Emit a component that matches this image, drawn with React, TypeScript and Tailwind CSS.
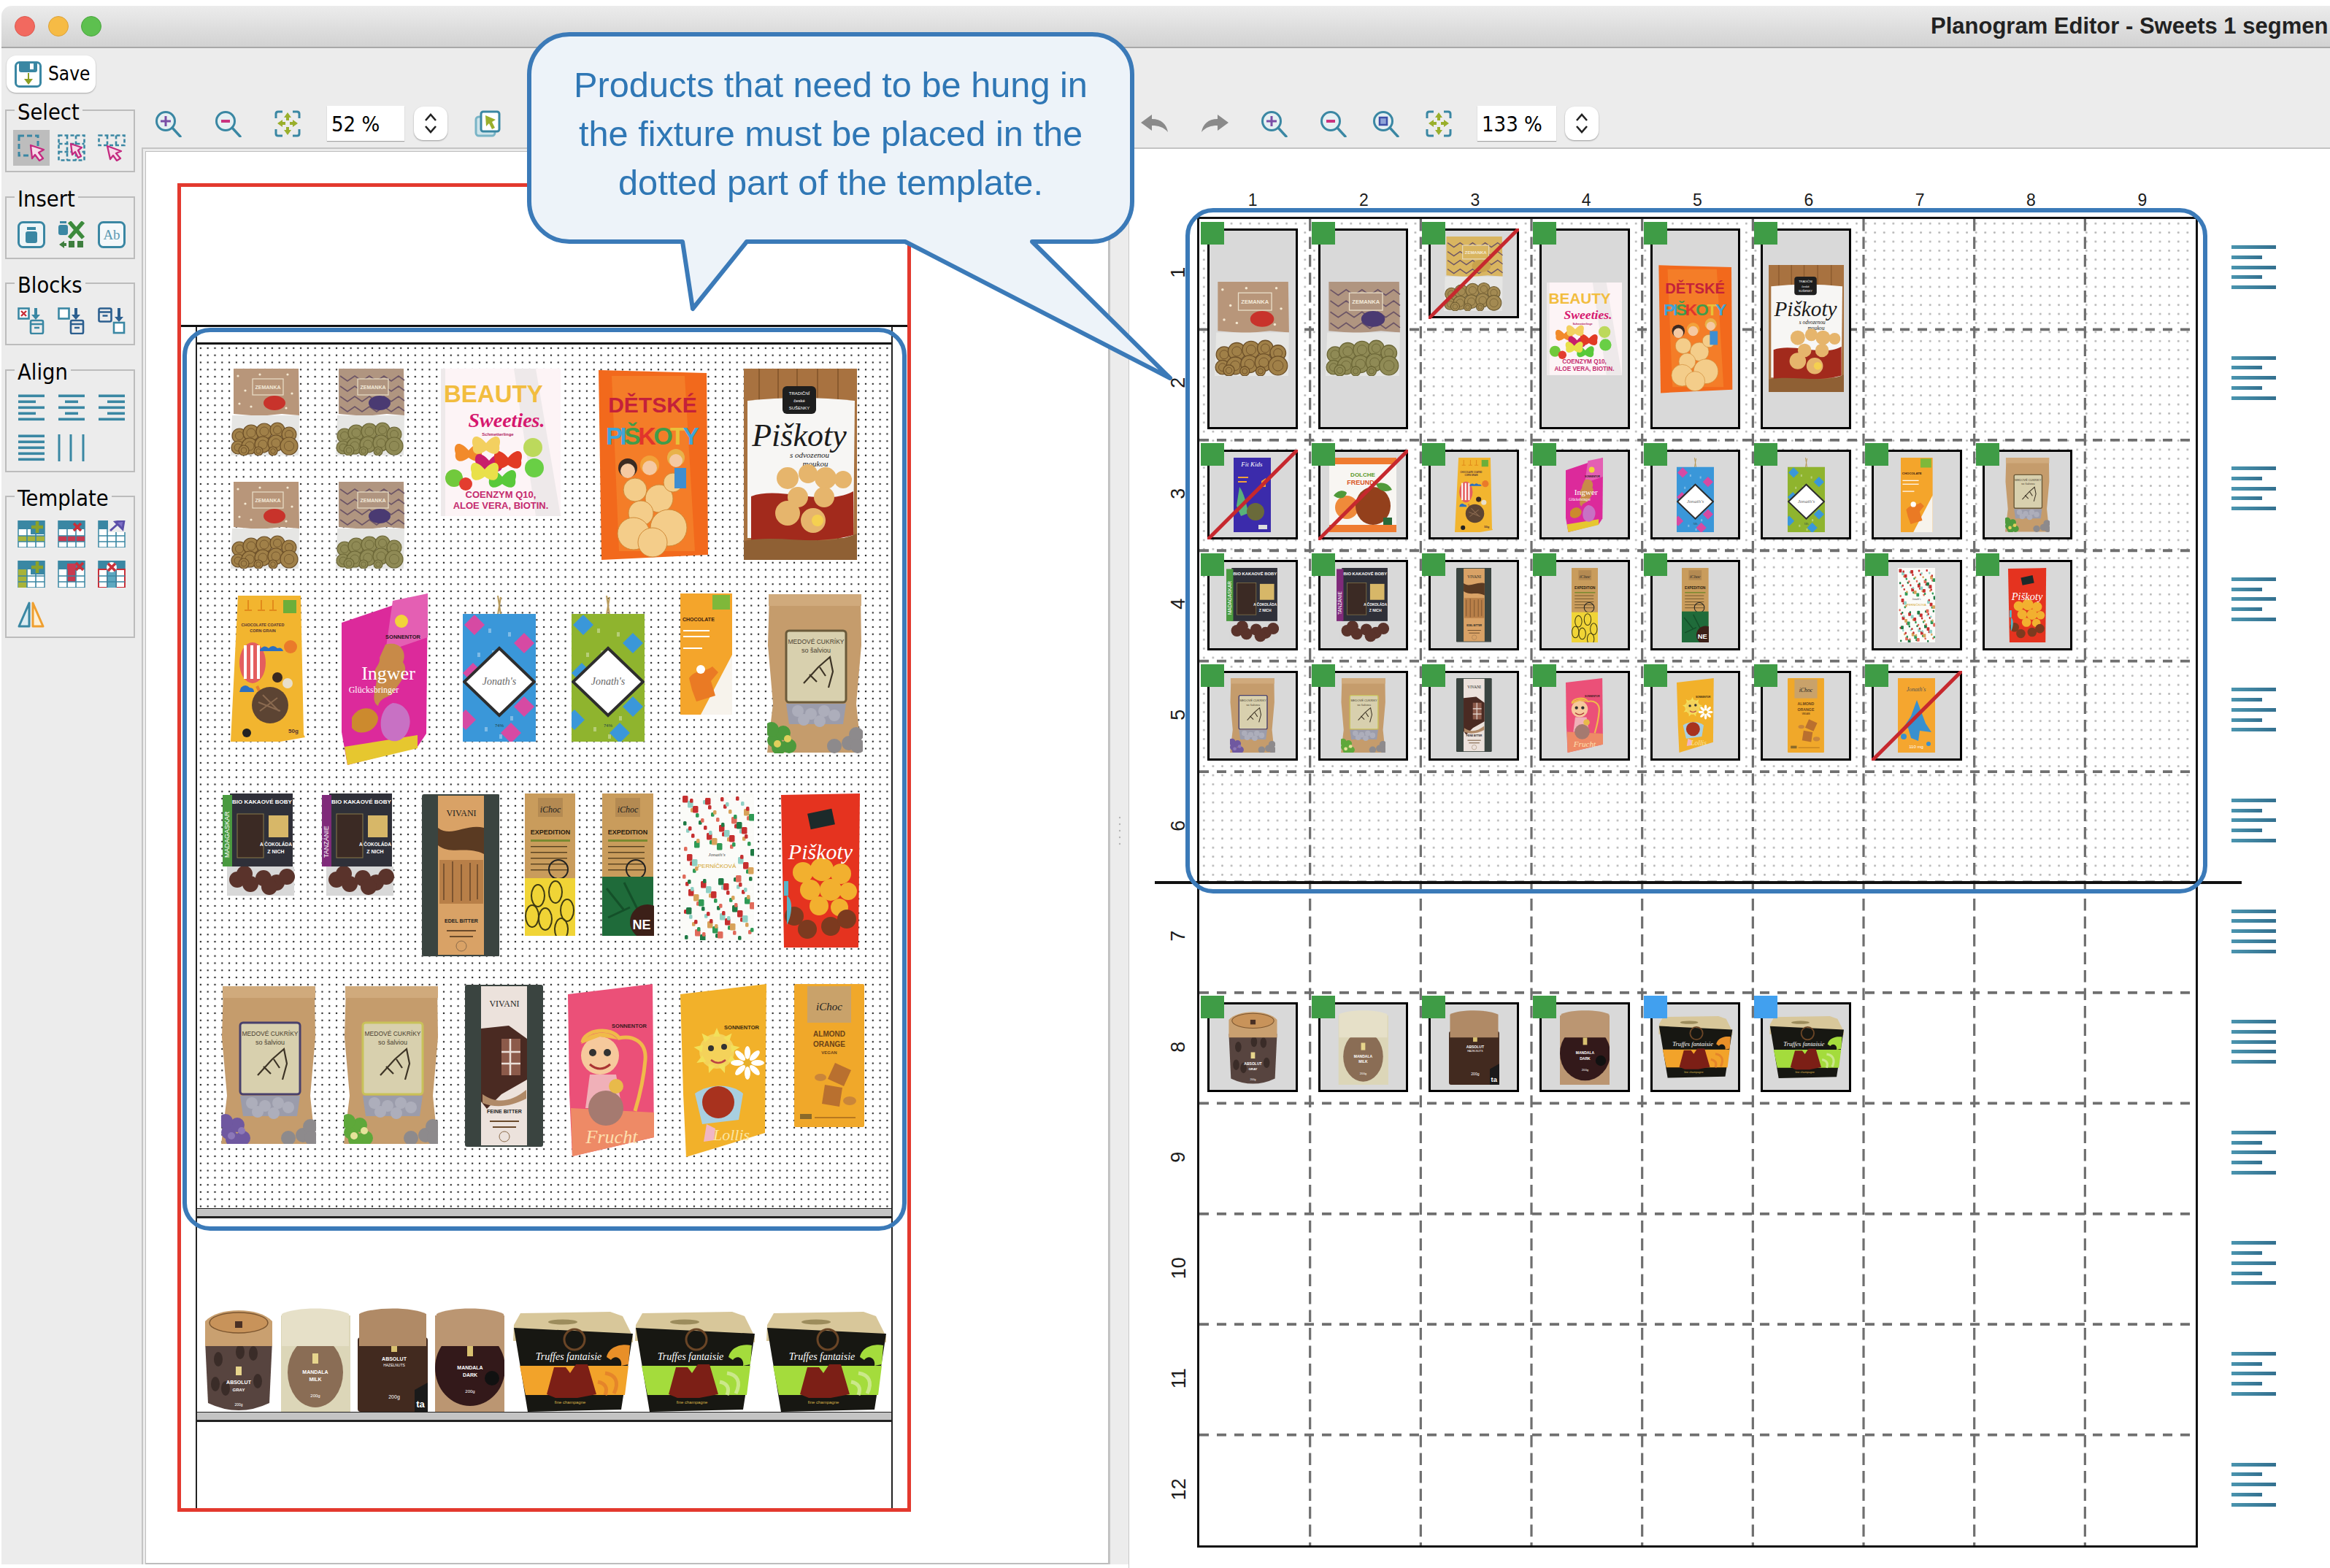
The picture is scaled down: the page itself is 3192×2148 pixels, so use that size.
import type { ReactNode } from "react";

// Planogram editor: left pane = fixture preview, right pane = template grid.

const TEAL = "#3a87a3";

function T({ x, y, s, c = "#fff", b, a = "middle", f = "Liberation Sans", i, children }: { x: number; y: number; s: number; c?: string; b?: boolean; a?: "middle" | "start"; f?: string; i?: boolean; children: ReactNode }) {
    return (
        <text x={x} y={y} fontSize={s} fill={c} fontWeight={b ? 700 : 400} fontStyle={i ? "italic" : "normal"} textAnchor={a} fontFamily={f}>
            {children}
        </text>
    );
}

const SERIF = "Liberation Serif";

const cookie = (card: string, badge: string, purple: boolean, crumb: string, edge: string) => (
    <>
        <path d="M4 0H93L94 64L70 62L40 65L4 62Z" fill={card} />
        {purple
            ? [10, 24, 38, 52].map((y) => <path key={y} d={`M6 ${y}l10 7 10-7 10 7 10-7 10 7 10-7 10 7 10-7 8 6`} fill="none" stroke="#6c5566" strokeWidth="1.6" />)
            : [[10, 10], [20, 30], [12, 48], [78, 8], [84, 34], [28, 52], [76, 54], [40, 8], [66, 40]].map(([x, y]) => <circle key={`${x}${y}`} cx={x} cy={y} r="1.6" fill="#f5e9d2" />)}
        <rect x="30" y="14" width="42" height="22" fill={card} stroke="#eadfc9" strokeWidth="1.2" />
        <T x={51} y={28} s={7} b c="#f3ead9">ZEMANKA</T>
        <ellipse cx="60" cy="47" rx="15" ry="10" fill={badge} />
        <path d="M2 64H94L93 119H0Z" fill="#e6e6e4" />
        {[[12, 92, 10], [28, 88, 11], [46, 86, 11], [64, 84, 10], [80, 90, 10], [10, 108, 9], [26, 106, 11], [44, 104, 11], [62, 102, 11], [80, 106, 12], [18, 112, 7], [38, 113, 6], [58, 113, 6]].map(([x, y, r]) => (
            <g key={`${x}-${y}`}>
                <circle cx={x} cy={y} r={r} fill={crumb} stroke={edge} strokeWidth="1.2" />
                <circle cx={x} cy={y} r={r * 0.55} fill="none" stroke={edge} strokeWidth=".8" />
            </g>
        ))}
    </>
);

const diamonds = (base: string, accent: string, h: number) => (
    <>
        <path d="M48 26L52 2M52 26L48 0" stroke="#b89a5a" strokeWidth="2" fill="none" />
        <rect x="0" y="25" width="100" height={h - 25} fill={base} />
        {[[16, 40], [84, 65], [14, 106], [84, 152], [4, 170], [66, 188]].map(([x, y]) => (
            <path key={`${x}${y}`} d={`M${x} ${y - 14}l14 14-14 14-14-14Z`} fill={accent} />
        ))}
        {[[35, 45], [62, 50], [40, 75], [20, 78], [65, 165], [30, 180], [50, 190], [85, 120]].map(([x, y]) => (
            <rect key={`${x}${y}`} x={x} y={y} width="4" height="6" fill="#fff" opacity=".35" />
        ))}
        <path d="M50 72L98 118L50 164L2 118Z" fill="#fff" stroke="#2d2d2d" strokeWidth="4" />
        <T x={50} y={122} s={14} c="#666" f={SERIF} i>Jonath's</T>
        <T x={50} y={180} s={6} c="#244">74%</T>
    </>
);

const honey = (line: string, leaf: string, leaf2: string) => (
    <>
        <path d="M3 0H128L129 70L122 150L129 217H0L8 150L1 70Z" fill="#c59c6c" />
        <rect x="2" y="0" width="127" height="16" fill="#d0aa7c" />
        <rect x="26" y="50" width="82" height="98" rx="4" fill="#d8d0ae" stroke={line} strokeWidth="3" />
        <T x={67} y={68} s={8.5} c="#4a4030">MEDOVÉ CUKRÍKY</T>
        <T x={67} y={80} s={9} c="#4a4030">so šalviou</T>
        <path d="M50 122l20-22 16-14 4 20-6 22M58 110l10 10M72 100l8 12" stroke="#3d3426" strokeWidth="2.2" fill="none" />
        <path d="M26 150H108L104 178L30 178Z" fill="#9b9cab" />
        {[[42, 160], [60, 164], [78, 160], [92, 166], [50, 172], [72, 174]].map(([x, y]) => <circle key={`${x}${y}`} cx={x} cy={y} r="8" fill="#adaebb" />)}
        {[[10, 200], [22, 190], [6, 185], [30, 208], [16, 210]].map(([x, y]) => <circle key={`${x}${y}`} cx={x} cy={y} r="10" fill={leaf} />)}
        {[[14, 205], [28, 198]].map(([x, y]) => <circle key={`${x}${y}`} cx={x} cy={y} r="5" fill={leaf2} />)}
        {[[112, 204], [122, 192], [92, 208], [124, 208]].map(([x, y]) => <circle key={`${x}${y}`} cx={x} cy={y} r="10" fill="#8d8a8c" />)}
    </>
);

const darkBag = (strip: string, name: string) => (
    <>
        <rect x="6" y="100" width="92" height="40" fill="#d8d8d8" />
        {[[20, 118], [38, 124], [56, 116], [74, 122], [88, 114], [30, 110], [64, 128]].map(([x, y]) => <circle key={`${x}${y}`} cx={x} cy={y} r="11" fill="#5a332b" />)}
        <rect x="10" y="0" width="86" height="100" fill="#2f3039" />
        <rect x="0" y="2" width="13" height="98" fill={strip} />
        <text transform="translate(9 88) rotate(-90)" fontSize="9" fill="#fff" fontFamily="Liberation Sans">{name}</text>
        <T x={54} y={14} s={8} b>BIO KAKAOVÉ BOBY</T>
        <rect x="20" y="28" width="36" height="60" fill="#3b2a24" stroke="#8a7a4a" />
        <rect x="63" y="30" width="27" height="30" fill="#d7b768" />
        <T x={73} y={72} s={6.5} b>A ČOKOLÁDA</T>
        <T x={73} y={82} s={7} b>Z NICH</T>
    </>
);

const vivani = (center: string, art: ReactNode, label: string) => (
    <>
        <rect x="0" y="0" width="107" height="222" rx="3" fill="#3a4440" />
        <rect x="22" y="2" width="63" height="218" fill={center} />
        {art}
        <T x={54} y={30} s={12} c="#222" f={SERIF}>VIVANI</T>
        <T x={54} y={176} s={7} b c="#222">{label}</T>
        <rect x="34" y="186" width="40" height="2" fill="#6a4a2a" />
        <rect x="38" y="194" width="32" height="2" fill="#6a4a2a" />
        <circle cx="54" cy="208" r="7" fill="none" stroke="#8a6a4a" />
    </>
);

const hoc = (bottom: ReactNode) => (
    <>
        <rect x="0" y="0" width="70" height="195" fill="#c99c5c" />
        <rect x="18" y="6" width="34" height="26" fill="#b48a52" />
        <T x={35} y={26} s={12} c="#222" f={SERIF} i>iChoc</T>
        <T x={35} y={56} s={9} b c="#2a2010">EXPEDITION</T>
        <rect x="8" y="63" width="54" height="3" fill="#7a8a30" />
        {[72, 80, 88, 96, 104].map((y) => <rect key={y} x="8" y={y} width="50" height="1.4" fill="#55401f" />)}
        <circle cx="46" cy="104" r="13" fill="none" stroke="#222" strokeWidth="2" />
        {bottom}
    </>
);

const cylinder = (lid: string, body: ReactNode, round: boolean) => (
    <>
        {body}
        <path d={`M2 ${round ? 18 : 8}C20 -2 76 -2 94 ${round ? 18 : 8}V52H2Z`} fill={lid} />
        {round && <ellipse cx="48" cy="20" rx="40" ry="14" fill="#c8935a" stroke="#7c5630" strokeWidth="1.5" />}
        {round && <rect x="43" y="18" width="10" height="9" fill="#4a3024" />}
    </>
);

const truffle = (band: string, swirl: string) => (
    <>
        <path d="M3 18L12 2L135 0L152 6L166 34V42L2 40Z" fill="#d8c79a" />
        <ellipse cx="70" cy="14" rx="20" ry="3.5" fill="#9c8c5c" />
        <path d="M3 22L166 30L150 134L22 137Z" fill="#171712" />
        <circle cx="86" cy="38" r="14" fill="none" stroke="#6a4526" strokeWidth="3" />
        <T x={78} y={66} s={14} f={SERIF} i>Truffes fantaisie</T>
        <path d="M11 74H160L155 114H19Z" fill={band} />
        <path d="M130 62c4-16 22-18 32-16l-2 26-10 2c2-10-8-16-14-8z" fill={swirl} />
        <path d="M128 84c14 2 20 12 12 28M118 96c10 2 14 8 10 18" stroke={swirl === band ? "#cbe88a" : "#e5852a"} strokeWidth="5" fill="none" />
        <path d="M48 113L58 76H74L80 84L88 72H104L116 113L90 118L60 118Z" fill="#7c1f16" />
        <T x={80} y={126} s={6} c="#d8b24a">fine champagne</T>
    </>
);

const xmasBits = Array.from({ length: 150 }, (_, i) => ({
    x: 3 + ((i * 37) % 94),
    y: 3 + ((i * 61) % 194),
    c: ["#c62f2f", "#2f9a55", "#8fd0c4", "#e06a5a", "#c62f2f", "#1f7a44", "#d8a25a"][i % 7],
    r: i % 3 === 0 ? 5 : 3
}));

const ART: Record<string, { w: number; h: number; art: ReactNode }> = {
    cookieRed: { w: 95, h: 119, art: cookie("#b8967a", "#c8332b", false, "#a08048", "#6c4f28") },
    cookiePurple: { w: 95, h: 119, art: cookie("#b09580", "#4a3a72", true, "#8f8a55", "#6b6636") },
    cookieYellow: { w: 95, h: 119, art: cookie("#d9b560", "#c9a24c", true, "#a38a52", "#6c5a30") },
    beauty: {
        w: 164,
        h: 202,
        art: (
            <>
                <rect width="164" height="202" fill="#fdf4f6" />
                <path d="M100 0h30l34 202h-34zM0 0v202h6V0z" fill="#eee9ea" />
                <T x={4} y={46} s={33} a="start" c="#f2bd3f" b>BEAUTY</T>
                <T x={90} y={80} s={28} c="#d6186f" b f={SERIF} i>Sweeties.</T>
                <T x={78} y={92} s={6} c="#b01860" b>Schmetterlinge</T>
                {[[38, 112, "#f28a2a"], [66, 126, "#c81e6b"], [92, 122, "#e23a24"], [62, 102, "#f3d060"], [84, 148, "#59c93a"], [60, 138, "#e9e04a"]].map(([x, y, c]) => (
                    <path key={`${x}${y}`} d={`M${x} ${y}c-14-16-22-8-18 4-2 12 8 14 18 6 10 8 20 6 18-6 4-12-4-20-18-4z`} fill={c as string} />
                ))}
                <circle cx="126" cy="108" r="13" fill="#bcd95c" />
                <circle cx="128" cy="136" r="13" fill="#69cf45" />
                <circle cx="18" cy="150" r="12" fill="#71c93c" />
                <circle cx="34" cy="158" r="9" fill="#e33d2f" />
                <T x={82} y={177} s={13} b c="#c42b6e">COENZYM Q10,</T>
                <T x={82} y={192} s={13} b c="#c42b6e">ALOE VERA, BIOTIN.</T>
            </>
        )
    },
    detske: {
        w: 153,
        h: 262,
        art: (
            <>
                <path d="M2 2L150 6L152 255L6 262Z" fill="#f2691c" />
                <path d="M20 10h100l14 240H30z" fill="#f47d28" />
                <T x={76} y={60} s={30} b c="#c4213a">DĚTSKÉ</T>
                <text x="76" y="104" fontSize="34" fontWeight="700" textAnchor="middle" fontFamily="Liberation Sans" textLength="128">
                    <tspan fill="#3fa4d8">PI</tspan><tspan fill="#3f9c4b">Š</tspan><tspan fill="#e1342c">K</tspan><tspan fill="#3f9c4b">O</tspan><tspan fill="#e8c13a">T</tspan><tspan fill="#3fa4d8">Y</tspan>
                </text>
                {[[52, 166, 16], [85, 178, 19], [60, 198, 17], [104, 156, 13], [50, 226, 22], [98, 218, 25], [76, 238, 20]].map(([x, y, r]) => <circle key={`${x}${y}`} cx={x} cy={y} r={r} fill="#f4cd8a" stroke="#d08a38" />)}
                <circle cx="42" cy="136" r="13" fill="#3b2a22" /><circle cx="42" cy="140" r="10" fill="#f5c9a2" />
                <circle cx="72" cy="132" r="13" fill="#f2a23a" /><circle cx="72" cy="136" r="10" fill="#f5c9a2" />
                <circle cx="108" cy="122" r="12" fill="#e8b24a" /><circle cx="108" cy="126" r="9" fill="#f5c9a2" />
                <rect x="106" y="136" width="16" height="28" fill="#3f8ed0" />
            </>
        )
    },
    piskoty: {
        w: 155,
        h: 262,
        art: (
            <>
                <rect width="155" height="262" fill="#a87240" />
                {[20, 46, 72, 100, 128].map((x) => <rect key={x} x={x} y="0" width="2" height="262" fill="#8a5a2e" />)}
                <path d="M5 44Q78 36 152 44L150 232H5Z" fill="#f7f6f4" />
                <rect x="53" y="24" width="46" height="38" rx="6" fill="#1e1e1e" />
                <T x={76} y={36} s={6}>TRADIČNÍ</T>
                <T x={76} y={46} s={6}>české</T>
                <T x={76} y={56} s={6}>SUŠENKY</T>
                <T x={76} y={106} s={44} c="#1b1b1b" f={SERIF} i>Piškoty</T>
                <T x={90} y={122} s={11} c="#222" f={SERIF} i>s odvozenou</T>
                <T x={98} y={134} s={11} c="#222" f={SERIF} i>moukou</T>
                <path d="M10 175C50 160 110 190 150 168V228C110 240 40 232 10 250Z" fill="#a22a1c" />
                {[[60, 150, 15], [88, 144, 13], [112, 150, 15], [136, 152, 12], [74, 176, 14], [110, 176, 14], [60, 198, 17], [95, 208, 17]].map(([x, y, r]) => <circle key={`${x}${y}`} cx={x} cy={y} r={r} fill="#e6b56c" />)}
                <circle cx="101" cy="208" r="8" fill="#f5d050" />
                <path d="M0 236C50 226 110 246 155 226V262H0Z" fill="#8f6034" />
            </>
        )
    },
    yellow: {
        w: 102,
        h: 200,
        art: (
            <>
                <path d="M10 0H96L100 190L102 194L68 200H0Z" fill="#f2b52f" />
                <rect x="72" y="6" width="18" height="18" fill="#6cae3a" />
                {[24, 42, 58].map((x) => <path key={x} d={`M${x} 6v14M${x - 5} 20h10`} stroke="#e28a1a" strokeWidth="2" />)}
                <T x={44} y={42} s={5.5} c="#533" b>CHOCOLATE COATED</T>
                <T x={44} y={50} s={5.5} c="#533" b>CORN GRAIN</T>
                <ellipse cx="30" cy="92" rx="18" ry="28" fill="#e45e5e" />
                {[18, 27, 36].map((x) => <rect key={x} x={x} y="68" width="4" height="46" fill="#fff" />)}
                <path d="M36 124l10 20" stroke="#e28030" strokeWidth="4" />
                <path d="M40 74q6-8 12-2 6-6 12 0 6-2 8 4H40z" fill="#2c6fc0" />
                <path d="M14 126q6-6 12 0 6 0 6 6H12z" fill="#2c6fc0" />
                <circle cx="64" cy="112" r="7" fill="#3a2a20" /><circle cx="78" cy="120" r="7" fill="#e9dfca" /><circle cx="82" cy="70" r="9" fill="#ea7a2a" />
                <circle cx="54" cy="150" r="25" fill="#5c4433" />
                <path d="M38 146l30 12M44 136l22 22M40 158l24-18" stroke="#8a6a50" strokeWidth="2" />
                <circle cx="22" cy="188" r="6" fill="#222" /><T x={86} y={188} s={8} c="#533" b>50g</T>
            </>
        )
    },
    pink: {
        w: 118,
        h: 235,
        art: (
            <>
                <path d="M0 40L118 0L116 192L104 210L8 235L0 190Z" fill="#dc2a9b" />
                <path d="M70 10L118 0V60L60 80Z" fill="#e45fb3" />
                <path d="M4 210L104 194L104 212L8 235Z" fill="#e6c72f" />
                <circle cx="82" cy="38" r="9" fill="#f2d43a" />
                <T x={84} y={62} s={7.5} c="#2a1420" b>SONNENTOR</T>
                <path d="M60 70c20-6 30 10 24 24 10 14-6 30-12 40-6 10-18 6-22 20-10-6-4-22-2-34-10-16 6-20 4-32z" fill="#c88a48" />
                <T x={64} y={118} s={26} f={SERIF}>Ingwer</T>
                <T x={44} y={136} s={12} f={SERIF}>Glücksbringer</T>
                <path d="M14 170c10-18 32-16 36 0 0 18-26 28-36 14z" fill="#cc8a2e" />
                <path d="M70 150c18 0 30 20 20 40-10 20-34 14-36-6-2-14 4-30 16-34z" fill="#c871c4" />
            </>
        )
    },
    tagBlue: { w: 100, h: 200, art: diamonds("#3a97d9", "#d64aa3", 200) },
    tagGreen: { w: 100, h: 200, art: diamonds("#8fb42e", "#3a97d9", 200) },
    orangeBar: {
        w: 71,
        h: 166,
        art: (
            <>
                <rect width="71" height="166" fill="#f4a52b" />
                <path d="M71 84L28 166H71Z" fill="#f7f3ec" />
                <rect x="44" y="2" width="24" height="20" fill="#7fb83a" />
                <T x={3} y={38} s={7} b a="start" c="#3a2010">CHOCOLATE</T>
                <rect x="4" y="50" width="36" height="2" fill="#fff" />
                <rect x="4" y="58" width="36" height="2" fill="#fff" />
                <rect x="4" y="74" width="26" height="2" fill="#fff" />
                <path d="M12 116c8-12 22-8 32-16l8 8-10 12 6 20-26 8-6-16z" fill="#ea7a24" />
                <circle cx="28" cy="104" r="6" fill="#fff" />
            </>
        )
    },
    honeyGinger: { w: 131, h: 218, art: honey("#6a5a3a", "#4c9a3c", "#e0cf5c") },
    honeyLav: { w: 130, h: 216, art: honey("#48406c", "#6f58a0", "#8c78b8") },
    honeyLime: { w: 129, h: 216, art: honey("#c8c25a", "#5ea83a", "#e5e39a") },
    darkGreen: { w: 99, h: 140, art: darkBag("#4a9a40", "MADAGASKAR") },
    darkPurple: { w: 99, h: 140, art: darkBag("#7f2a7a", "TANZÁNIE") },
    vivaniWarm: {
        w: 106,
        h: 223,
        art: vivani("#d9a266", <><path d="M22 46C40 60 60 40 85 46V82C60 70 40 84 22 70Z" fill="#5a3a22" /><path d="M24 90H84V150H24Z" fill="#b87f48" /><path d="M30 95v50M42 92v56M54 96v50M66 94v52M76 96v48" stroke="#7c5430" strokeWidth="2" /></>, "EDEL BITTER")
    },
    vivaniDark: {
        w: 107,
        h: 224,
        art: vivani("#ece2dc", <><path d="M22 60L60 56L85 74V130L50 150L30 170L22 160Z" fill="#4a2a22" /><path d="M50 74h26v50H50z" fill="#8c5a4a" /><path d="M62 74v50M50 92h26M50 108h26" stroke="#eadfd8" strokeWidth="2.5" /><path d="M24 150c20 14 40 10 60-6v12c-20 10-40 14-60 6z" fill="#b08a68" /></>, "FEINE BITTER")
    },
    hocYellow: {
        w: 69,
        h: 195,
        art: hoc(<><rect y="116" width="70" height="79" fill="#f0d436" />{[[18, 140], [42, 135], [58, 160], [28, 172], [10, 168], [50, 186]].map(([x, y]) => <ellipse key={`${x}${y}`} cx={x} cy={y} rx="9" ry="15" fill="none" stroke="#3e3a12" strokeWidth="2" />)}</>)
    },
    hocGreen: {
        w: 71,
        h: 195,
        art: hoc(<><rect y="114" width="70" height="81" fill="#1f6b3a" /><path d="M6 130l24 30M30 122l20 40M8 170l30-14" stroke="#145029" strokeWidth="3" /><circle cx="62" cy="176" r="24" fill="#3c2018" /><T x={54} y={186} s={18} b>NE</T></>)
    },
    xmas: {
        w: 101,
        h: 201,
        art: (
            <>
                <rect width="101" height="201" fill="#fbfbf8" />
                {xmasBits.filter((b) => !(b.y > 70 && b.y < 114 && b.x > 20 && b.x < 76)).map((b, i) => <rect key={i} x={b.x} y={b.y} width={b.r * 1.5} height={b.r * 1.9} rx="1.5" fill={b.c} />)}
                <T x={50} y={86} s={7} c="#444" f={SERIF} i>Jonath's</T>
                <T x={50} y={102} s={8} c="#d2a22a">PERNÍČKOVÁ</T>
            </>
        )
    },
    red: {
        w: 108,
        h: 211,
        art: (
            <>
                <path d="M0 2L108 0L106 211H4Z" fill="#e5331f" />
                <rect x="38" y="24" width="34" height="22" fill="#1c2a2a" transform="rotate(-12 55 35)" />
                {[[30, 108, 14], [56, 104, 16], [82, 110, 14], [40, 132, 14], [68, 132, 15], [92, 134, 12], [52, 154, 13], [80, 156, 12]].map(([x, y, r]) => <circle key={`${x}${y}`} cx={x} cy={y} r={r} fill="#f2b02f" />)}
                <T x={54} y={90} s={30} f={SERIF} i>Piškoty</T>
                {[[18, 168], [36, 186], [68, 182], [90, 172]].map(([x, y]) => <circle key={`${x}${y}`} cx={x} cy={y} r="13" fill="#7c3a1f" />)}
                <path d="M8 140c10 6 6 30 0 40zM4 120h6v20H4z" fill="#58b5c8" />
            </>
        )
    },
    princess: {
        w: 118,
        h: 236,
        art: (
            <>
                <path d="M0 14L116 0L118 210L6 236L2 150Z" fill="#eb5078" />
                <path d="M4 170L118 176V210L6 236Z" fill="#ee8a66" />
                <T x={84} y={60} s={7.5} c="#3a1a20" b>SONNENTOR</T>
                <circle cx="44" cy="98" r="26" fill="#f6c99c" />
                <path d="M20 80c2-18 40-22 50-6 18-4 38 4 36 30-2 24-8 50-14 70" fill="none" stroke="#f0ba4a" strokeWidth="5" />
                <path d="M18 82c10-18 40-20 50-6L44 72z" fill="#f0ba4a" />
                <circle cx="34" cy="94" r="5" fill="#333" /><circle cx="54" cy="94" r="5" fill="#333" />
                <path d="M30 110q14 12 28 0" stroke="#a33" strokeWidth="3" fill="none" />
                <path d="M30 124L66 124L74 170H24Z" fill="#f0b0b8" />
                <circle cx="52" cy="170" r="24" fill="#a57a70" />
                <circle cx="66" cy="140" r="10" fill="#e8ba4a" />
                <T x={60} y={218} s={26} c="#fde0b0" f={SERIF} i>Frucht</T>
            </>
        )
    },
    daisy: {
        w: 119,
        h: 237,
        art: (
            <>
                <path d="M0 14L118 0L116 204L8 237L4 150Z" fill="#f2b12a" />
                <circle cx="50" cy="92" r="24" fill="#f4d25a" />
                {[0, 40, 80, 120, 160, 200, 240, 280, 320].map((d) => <path key={d} d="M50 60l-5 12h10z" fill="#f2e05a" transform={`rotate(${d} 50 92)`} />)}
                <circle cx="42" cy="88" r="4" fill="#333" /><circle cx="60" cy="86" r="4" fill="#333" />
                <path d="M42 104q10 8 20 0" stroke="#b44" strokeWidth="2.5" fill="none" />
                <T x={84} y={62} s={7.5} c="#3a2a10" b>SONNENTOR</T>
                <circle cx="92" cy="108" r="6" fill="#e8b02a" />
                {[0, 45, 90, 135, 180, 225, 270, 315].map((d) => <ellipse key={d} cx="92" cy="94" rx="4" ry="9" fill="#fff" transform={`rotate(${d} 92 108)`} />)}
                <path d="M20 150c20-14 50-14 66 0l-6 36-50 6z" fill="#a8cfe0" />
                <circle cx="52" cy="162" r="22" fill="#a8321e" />
                <path d="M36 192l-4 24 14-2 2-16z" fill="#f0b6c4" />
                <T x={70} y={214} s={22} c="#fbe6a4" f={SERIF} i>Lollis</T>
            </>
        )
    },
    almond: {
        w: 96,
        h: 196,
        art: (
            <>
                <rect width="96" height="196" rx="2" fill="#f0a82a" />
                <rect x="18" y="3" width="60" height="50" fill="#c9a26a" />
                <T x={48} y={36} s={15} c="#222" f={SERIF} i>iChoc</T>
                <T x={48} y={72} s={10} b c="#6a4218">ALMOND</T>
                <T x={48} y={86} s={10} b c="#6a4218">ORANGE</T>
                <T x={48} y={96} s={6} b c="#6a4218">VEGAN</T>
                <path d="M56 108l22 10-10 22-22-10zM42 138l24 4-4 26-24-4z" fill="#b9702f" />
                <ellipse cx="36" cy="128" rx="8" ry="5" fill="#c9853a" /><ellipse cx="76" cy="160" rx="9" ry="6" fill="#c9853a" />
                <rect x="8" y="178" width="16" height="7" fill="#8a6a2a" />
                <rect x="28" y="182" width="56" height="2" fill="#b8781f" />
            </>
        )
    },
    cyl1: {
        w: 95,
        h: 142,
        art: cylinder("#c9a070", <><path d="M2 45H94L90 130Q48 150 6 130Z" fill="#57443f" />{[[20, 70], [68, 62], [30, 110], [74, 100], [50, 60], [16, 104]].map(([x, y]) => <ellipse key={`${x}${y}`} cx={x} cy={y} rx="6" ry="10" fill="#3a2c28" />)}<rect x="44" y="80" width="8" height="12" fill="#e7d58c" /><T x={48} y={104} s={7} b>ABSOLUT</T><T x={48} y={114} s={6} b>GRAY</T><T x={48} y={134} s={5}>200g</T></>, true)
    },
    cyl2: {
        w: 97,
        h: 142,
        art: cylinder("#e6e0c8", <><rect x="1" y="10" width="95" height="132" fill="#dcd6b8" /><ellipse cx="48" cy="88" rx="38" ry="48" fill="#8a6d55" /><rect x="44" y="62" width="8" height="14" fill="#e7d58c" /><T x={48} y={90} s={7} b>MANDALA</T><T x={48} y={100} s={7} b>MILK</T><T x={48} y={122} s={6}>200g</T></>, false)
    },
    cyl3: {
        w: 96,
        h: 142,
        art: cylinder("#b08a66", <><rect x="0" y="40" width="96" height="102" rx="4" fill="#422a1f" /><rect x="46" y="46" width="8" height="14" fill="#d8c070" /><T x={50} y={72} s={7} b>ABSOLUT</T><T x={50} y={80} s={5}>HAZELNUTS</T><T x={50} y={124} s={7}>200g</T><path d="M78 142v-30l18-10v40z" fill="#1a1a1a" /><T x={86} y={136} s={13} b>ta</T></>, false)
    },
    cyl4: {
        w: 95,
        h: 142,
        art: cylinder("#bb9672", <><rect x="0" y="10" width="95" height="132" fill="#bb9672" /><ellipse cx="48" cy="82" rx="48" ry="52" fill="#33191a" /><rect x="44" y="52" width="8" height="14" fill="#d8c070" /><T x={48} y={84} s={7} b>MANDALA</T><T x={48} y={94} s={7} b>DARK</T><T x={48} y={116} s={6}>200g</T><circle cx="78" cy="96" r="10" fill="#111" /></>, false)
    },
    boxOrange: { w: 167, h: 137, art: truffle("#f2a32a", "#e88f28") },
    boxGreen: { w: 166, h: 137, art: truffle("#a4dc3c", "#a4dc3c") },
    rocket: {
        w: 51,
        h: 102,
        art: (
            <>
                <rect width="51" height="102" fill="#3b2bab" />
                <T x={25} y={12} s={9} f={SERIF} i>Fit Kids</T>
                <path d="M8 40c6 8 10 24 12 36l-10 4-6-14z" fill="#59b27a" />
                <path d="M44 28l-6 4v8h6zM6 26h14v2H6zM6 32h12v2H6z" fill="#f0a03a" />
                <circle cx="30" cy="74" r="12" fill="#6a6a3a" />
                <rect x="34" y="92" width="12" height="6" fill="#ddd" />
            </>
        )
    },
    peach: {
        w: 92,
        h: 102,
        art: (
            <>
                <rect width="92" height="102" fill="#f8f6f2" />
                <rect width="92" height="9" fill="#ef7b30" />
                <rect y="92" width="92" height="10" fill="#ef7b30" />
                <T x={46} y={26} s={8} b c="#5a9a2a">DOLCHE</T>
                <T x={46} y={37} s={9} b c="#d8541f">FREUNDE</T>
                <circle cx="24" cy="68" r="16" fill="#ef8a3a" />
                <path d="M6 52c6-8 14-8 18-4-2 8-10 10-18 4z" fill="#4f9a3a" />
                <ellipse cx="60" cy="66" rx="24" ry="26" fill="#93401c" />
                <path d="M64 36c10-4 18 0 22 8-10 4-18 2-22-8z" fill="#4f9a3a" />
                <rect x="74" y="82" width="12" height="10" fill="#2a6a3a" />
            </>
        )
    },
    xmasOrange: {
        w: 51,
        h: 102,
        art: (
            <>
                <rect width="51" height="102" fill="#f5a62f" />
                <T x={25} y={18} s={8} c="#555" f={SERIF} i>Jonath's</T>
                <path d="M26 30L38 62L46 74L30 72L28 86L18 82L14 68L6 70L18 52Z" fill="#3990cf" />
                <circle cx="8" cy="80" r="4" fill="#3990cf" />
                <circle cx="42" cy="90" r="3" fill="#3990cf" />
                <T x={25} y={96} s={6}>110 mg</T>
            </>
        )
    }
};

function Product({ kind, scale = 1 }: { kind: string; scale?: number }) {
    const p = ART[kind];
    return (
        <svg viewBox={`0 0 ${p.w} ${p.h}`} width={p.w * scale} height={p.h * scale} className="block shrink-0">
            {p.art}
        </svg>
    );
}

// pegboard placements, in screen coordinates of the fixture
const PEG: [string, number, number][] = [
    ["cookieRed", 315, 507], ["cookiePurple", 459, 507], ["beauty", 603, 507], ["detske", 817, 507], ["piskoty", 1018, 507],
    ["cookieRed", 315, 662], ["cookiePurple", 459, 662],
    ["yellow", 315, 818], ["pink", 467, 815], ["tagBlue", 633, 818], ["tagGreen", 782, 818], ["orangeBar", 931, 815], ["honeyGinger", 1050, 816],
    ["darkGreen", 304, 1089], ["darkPurple", 440, 1089], ["vivaniWarm", 577, 1090], ["hocYellow", 718, 1089], ["hocGreen", 824, 1089], ["xmas", 931, 1089], ["red", 1069, 1089],
    ["honeyLav", 302, 1353], ["honeyLime", 470, 1353], ["vivaniDark", 636, 1351], ["princess", 777, 1350], ["daisy", 931, 1350], ["almond", 1087, 1350]
];

type Cell = { kind: string; col: number; row: number; tall?: boolean; cross?: boolean; blue?: boolean };
const CELLS: Cell[] = [
    { kind: "cookieRed", col: 1, row: 1, tall: true }, { kind: "cookiePurple", col: 2, row: 1, tall: true }, { kind: "cookieYellow", col: 3, row: 1, cross: true },
    { kind: "beauty", col: 4, row: 1, tall: true }, { kind: "detske", col: 5, row: 1, tall: true }, { kind: "piskoty", col: 6, row: 1, tall: true },
    { kind: "rocket", col: 1, row: 3, cross: true }, { kind: "peach", col: 2, row: 3, cross: true }, { kind: "yellow", col: 3, row: 3 }, { kind: "pink", col: 4, row: 3 },
    { kind: "tagBlue", col: 5, row: 3 }, { kind: "tagGreen", col: 6, row: 3 }, { kind: "orangeBar", col: 7, row: 3 }, { kind: "honeyGinger", col: 8, row: 3 },
    { kind: "darkGreen", col: 1, row: 4 }, { kind: "darkPurple", col: 2, row: 4 }, { kind: "vivaniWarm", col: 3, row: 4 }, { kind: "hocYellow", col: 4, row: 4 }, { kind: "hocGreen", col: 5, row: 4 },
    { kind: "xmas", col: 7, row: 4 }, { kind: "red", col: 8, row: 4 },
    { kind: "honeyLav", col: 1, row: 5 }, { kind: "honeyLime", col: 2, row: 5 }, { kind: "vivaniDark", col: 3, row: 5 }, { kind: "princess", col: 4, row: 5 }, { kind: "daisy", col: 5, row: 5 }, { kind: "almond", col: 6, row: 5 },
    { kind: "xmasOrange", col: 7, row: 5, cross: true },
    { kind: "cyl1", col: 1, row: 8 }, { kind: "cyl2", col: 2, row: 8 }, { kind: "cyl3", col: 3, row: 8 }, { kind: "cyl4", col: 4, row: 8 },
    { kind: "boxOrange", col: 5, row: 8, blue: true }, { kind: "boxGreen", col: 6, row: 8, blue: true }
];

function GridCell({ cell }: { cell: Cell }) {
    const p = ART[cell.kind];
    const scale = Math.min(103 / p.w, (cell.tall ? 256 : 102) / p.h);
    return (
        <div className="relative pb-[15px] pl-[11px] pr-[17px] pt-[13px]" style={{ gridColumn: cell.col, gridRow: cell.tall ? `${cell.row} / span 2` : cell.row }}>
            <div className="relative flex h-full items-center justify-center border-[3px] border-black bg-[#d9d9d9]">
                <Product kind={cell.kind} scale={scale} />
                <div className={`absolute -left-[12px] -top-[12px] h-[31px] w-[32px] ${cell.blue ? "bg-[#41a0ef]" : "bg-[#3f9c46]"}`} />
                {cell.cross && (
                    <svg className="absolute -inset-[3px]" viewBox="0 0 100 100" preserveAspectRatio="none">
                        <line x1="0" y1="100" x2="100" y2="0" stroke="#c6282e" strokeWidth="5" vectorEffect="non-scaling-stroke" />
                    </svg>
                )}
            </div>
        </div>
    );
}

// ---- icons ----

function Mag({ children }: { children: ReactNode }) {
    return (
        <svg viewBox="0 0 37 37" className="h-[37px] w-[37px] shrink-0">
            <circle cx="15" cy="15" r="12.5" fill="#e6f0f3" stroke={TEAL} strokeWidth="3" />
            <path d="M24 24L35 36" stroke={TEAL} strokeWidth="3.4" strokeLinecap="round" />
            {children}
        </svg>
    );
}
const ZoomIn = () => <Mag><path d="M15 8v14M8 15h14" stroke="#7a4ea6" strokeWidth="3" /></Mag>;
const ZoomOut = () => <Mag><path d="M9 15h12" stroke="#c9337f" strokeWidth="4" /></Mag>;
const ZoomReal = () => <Mag><rect x="10" y="10" width="10" height="10" fill="#8fa4d8" stroke="#3f50a8" strokeWidth="2.5" /></Mag>;

function ZoomFit() {
    return (
        <svg viewBox="0 0 36 37" className="h-[37px] w-[36px] shrink-0">
            <path d="M2 11V5Q2 2 5 2H11M25 2H31Q34 2 34 5V11M34 26V32Q34 35 31 35H25M11 35H5Q2 35 2 32V26" fill="none" stroke={TEAL} strokeWidth="3" />
            <path d="M18 3l5 7h-3v4h-4v-4h-3zM18 34l-5-7h3v-4h4v4h3zM4 18l7-5v3h4v4h-4v3zM32 18l-7 5v-3h-4v-4h4v-3z" fill="#9aaf2c" />
        </svg>
    );
}

function Layers() {
    return (
        <svg viewBox="0 0 36 37" className="h-[37px] w-[36px] shrink-0">
            <rect x="2" y="9" width="26" height="26" rx="4" fill="#cfe4ea" stroke="#79b4c6" strokeWidth="3" />
            <rect x="9" y="2" width="25" height="27" rx="3" fill="#fff" stroke={TEAL} strokeWidth="3" />
            <path d="M15 7L29 13L24 16L28 24L24 26L20 18L16 22Z" fill="#9aaf2c" />
        </svg>
    );
}

function Undo({ flip }: { flip?: boolean }) {
    return (
        <svg viewBox="0 0 37 24" className={`h-[24px] w-[37px] shrink-0 ${flip ? "-scale-x-100" : ""}`}>
            <path d="M0 11L15 0V6C28 6 35 13 37 24C31 17 24 15 15 15V22Z" fill="#8a8a8a" />
        </svg>
    );
}

function Stepper() {
    return (
        <div className="flex h-[46px] w-[46px] shrink-0 items-center justify-center rounded-[13px] bg-white shadow-[0_1px_2px_rgba(0,0,0,.35)]">
            <svg viewBox="0 0 20 30" className="h-[30px] w-[20px]">
                <path d="M3 11L10 3L17 11M3 19L10 27L17 19" fill="none" stroke="#222" strokeWidth="2.6" />
            </svg>
        </div>
    );
}

function ZoomField({ value, w }: { value: string; w: string }) {
    return (
        <div className={`flex h-[48px] shrink-0 items-center bg-white pl-[6px] pt-[3px] text-[29px] text-black shadow-[0_1px_1px_rgba(0,0,0,.3)] ${w}`}>{value}</div>
    );
}

const Arrow = ({ d }: { d: string }) => <path d={d} fill="#f6dbe9" stroke="#c42a80" strokeWidth="2.3" strokeLinejoin="round" />;

const box = "h-[37px] w-[38px]";
const Ic = ({ children }: { children: ReactNode }) => <svg viewBox="0 0 38 37" className={box}>{children}</svg>;

const Bars = ({ spans }: { spans: [number, number][] }) => (
    <Ic>
        {spans.map(([a, b], i) => <rect key={i} x={a} y={i * 8 + 0.5} width={b - a} height="3.6" fill={TEAL} />)}
    </Ic>
);

function ArchiveBox({ x, y, c }: { x: number; y: number; c: string }) {
    return (
        <g fill="none" stroke={c} strokeWidth="2.6">
            <rect x={x} y={y} width="17" height="18" rx="2" />
            <path d={`M${x} ${y + 5}h17M${x + 5} ${y + 10}h7`} />
        </g>
    );
}

function TableIcon({ children, strip }: { children?: ReactNode; strip?: ReactNode }) {
    return (
        <Ic>
            <rect x="1" y="0" width="36" height="37" fill="#fff" stroke={TEAL} strokeWidth="1.5" />
            <rect x="1" y="0" width="36" height="12" fill={TEAL} />
            {strip}
            <path d="M13 12v25M25 12v25M1 21h36M1 29h36" stroke={TEAL} strokeWidth="1.6" />
            {children}
        </Ic>
    );
}
const Plus = () => <path d="M27 1v16M19 9h16" stroke="#8aa12a" strokeWidth="4.5" />;
const Cross = ({ x = 27, y = 9 }: { x?: number; y?: number }) => <path d={`M${x - 5} ${y - 5}l10 10M${x + 5} ${y - 5}l-10 10`} stroke="#c8303a" strokeWidth="3.6" />;

function Dots() {
    return (
        <svg viewBox="0 0 6 50" className="h-[50px] w-[6px]">
            {[4, 13, 22, 31, 40].map((y) => <circle key={y} cx="3" cy={y} r="1.2" fill="#b5b5b5" />)}
        </svg>
    );
}

function Group({ title, children, h }: { title: string; children: ReactNode; h: string }) {
    return (
        <fieldset className={`w-[178px] border-2 border-[#bcbcbc] pt-[20px] ${h}`}>
            <legend className="ml-[11px] h-[26px] px-[4px] text-[30.5px] leading-[26px] text-black">
                <span className="relative top-[3px]">{title}</span>
            </legend>
            <div className="grid grid-cols-[repeat(3,38px)] gap-x-[17px] gap-y-[18px] pl-[15px]">{children}</div>
        </fieldset>
    );
}

function AlignIcon({ full }: { full?: boolean }) {
    const rows = [true, !!full, true, !!full, true];
    return (
        <div className="flex h-[60px] w-[61px] flex-col justify-between">
            {rows.map((long, i) => (
                <div key={i} className={`h-[5px] bg-gradient-to-r from-[#4a94ae] to-[#33708f] ${long ? "w-[61px]" : "w-[42px]"}`} />
            ))}
        </div>
    );
}

export default function App() {
    const rows = Array.from({ length: 12 }, (_, i) => i + 1);
    const cols = Array.from({ length: 9 }, (_, i) => i + 1);
    const bottomShelf: [string, string][] = [["cyl1", "mr-[10px]"], ["cyl2", "mr-[9px]"], ["cyl3", "mr-[10px]"], ["cyl4", "mr-[10px]"], ["boxOrange", ""], ["boxGreen", "mr-[14px]"], ["boxGreen", ""]];

    return (
        <div className="relative flex h-[2148px] w-[3192px] flex-col overflow-hidden bg-white pb-[5px] pl-[2px] pt-[8px] font-['DejaVu_Sans_Condensed','DejaVu_Sans',sans-serif]">
            {/* title bar */}
            <div className="flex h-[58px] shrink-0 items-center rounded-tl-[14px] border-b-2 border-[#a8a8a8] bg-gradient-to-b from-[#ececec] to-[#d2d2d2] pl-[18px]">
                <div className="h-[28px] w-[28px] rounded-full border border-[#dc5a50] bg-[#f2695f]" />
                <div className="ml-[18px] h-[28px] w-[28px] rounded-full border border-[#dca23a] bg-[#f6bb45]" />
                <div className="ml-[17px] h-[28px] w-[28px] rounded-full border border-[#4aa63f] bg-[#5dc04f]" />
                <div className="ml-[2506px] whitespace-nowrap font-['Liberation_Sans',sans-serif] text-[31px] font-bold text-[#222]">Planogram Editor - Sweets 1 segmen</div>
            </div>

            <div className="flex min-h-0 flex-1 flex-col bg-[#ececec]">
                {/* save row */}
                <div className="h-[72px] shrink-0 pl-[7px] pt-[10px]">
                    <div className="flex h-[51px] w-[122px] items-center gap-[9px] rounded-[13px] bg-white pl-[11px] text-[26px] text-black shadow-[0_1px_2px_rgba(0,0,0,.3)]">
                        <svg viewBox="0 0 37 36" className="h-[36px] w-[37px]">
                            <rect x="1.5" y="1.5" width="34" height="33" rx="5" fill="#fff" stroke={TEAL} strokeWidth="3" />
                            <path d="M6 2H31V12Q31 15 28 15H9Q6 15 6 12Z" fill={TEAL} />
                            <rect x="21" y="3" width="5" height="8" fill="#fff" />
                            <path d="M20 16v8h5l-6 8-6-8h5v-8z" fill="#8a9e22" />
                        </svg>
                        Save
                    </div>
                </div>

                <div className="flex min-h-0 flex-1">
                    {/* tool sidebar */}
                    <aside className="flex w-[192px] shrink-0 flex-col gap-[20.5px] pl-[5px]">
                        <Group title="Select" h="h-[98px]">
                            <div className="bg-[#bdbdbd] shadow-[0_0_0_6px_#bdbdbd]">
                                <Ic>
                                    <rect x="2" y="2" width="26" height="27" fill="none" stroke={TEAL} strokeWidth="3" strokeDasharray="7 4" />
                                    <Arrow d="M18 15L36 21L29 25L35 33L30 36L24 28L20 33Z" />
                                </Ic>
                            </div>
                            <Ic>
                                <path d="M1.5 1.5H36.5V35.5H1.5ZM13 1.5V35.5M25 1.5V35.5M1.5 13H36.5M1.5 24H36.5" fill="none" stroke={TEAL} strokeWidth="2.6" strokeDasharray="5 3" />
                                <Arrow d="M18 13L33 18L28 22L32 30L28 32L24 24L20 28Z" />
                            </Ic>
                            <Ic>
                                <path d="M1.5 1.5H36.5V15H1.5ZM13 1.5V15M25 1.5V15" fill="none" stroke={TEAL} strokeWidth="2.6" strokeDasharray="5 3" />
                                <Arrow d="M13 16L32 23L25 26L31 33L26 36L21 29L17 34Z" />
                            </Ic>
                        </Group>
                        <Group title="Insert" h="h-[98px]">
                            <Ic>
                                <rect x="1.5" y="1.5" width="35" height="34" rx="6" fill="#eef5f7" stroke={TEAL} strokeWidth="3" />
                                <rect x="13" y="8" width="12" height="4" fill={TEAL} />
                                <rect x="11" y="14" width="16" height="16" rx="3" fill={TEAL} />
                            </Ic>
                            <Ic>
                                <rect x="3" y="0" width="9" height="3" fill={TEAL} />
                                <rect x="1" y="5" width="13" height="14" rx="3" fill={TEAL} />
                                <path d="M16 1L35 23M35 1L16 23" stroke="#3c8a3c" strokeWidth="5.5" />
                                <path d="M2 32l7-5v3h3v4H9v3zM15 27h8v9h-8zM27 27h8v9h-8z" fill="#3f7f3f" />
                            </Ic>
                            <Ic>
                                <rect x="1.5" y="1.5" width="35" height="34" rx="6" fill="#f4f8fa" stroke={TEAL} strokeWidth="3" />
                                <text x="19" y="25" fontSize="19" textAnchor="middle" fill="#5c9ab2" fontFamily="Liberation Serif">Ab</text>
                            </Ic>
                        </Group>
                        <Group title="Blocks" h="h-[98px]">
                            <Ic>
                                <rect x="1.5" y="1.5" width="14" height="14" fill="#fff" stroke={TEAL} strokeWidth="2.6" />
                                <path d="M5 5l7 7M12 5l-7 7" stroke="#c8303a" strokeWidth="2.4" />
                                <path d="M23 1h4v9h4l-6 7-6-7h4z" fill={TEAL} />
                                <ArchiveBox x={18} y={18} c={TEAL} />
                            </Ic>
                            <Ic>
                                <rect x="1.5" y="1.5" width="14" height="14" fill="#fff" stroke={TEAL} strokeWidth="2.6" />
                                <path d="M23 1h4v9h4l-6 7-6-7h4z" fill="#2c5f8f" />
                                <ArchiveBox x={18} y={18} c="#2c5f8f" />
                            </Ic>
                            <Ic>
                                <ArchiveBox x={1.5} y={1.5} c="#2c5f8f" />
                                <path d="M27 1h4v12h4l-6 7-6-7h4z" fill="#2c5f8f" />
                                <rect x="22" y="21" width="14" height="14" fill="#fff" stroke={TEAL} strokeWidth="2.6" />
                            </Ic>
                        </Group>
                        <Group title="Align" h="h-[153px]">
                            <Bars spans={[[1, 37], [1, 25], [1, 37], [1, 25], [1, 37]]} />
                            <Bars spans={[[1, 37], [10, 28], [1, 37], [10, 28], [1, 37]]} />
                            <Bars spans={[[1, 37], [13, 37], [1, 37], [13, 37], [1, 37]]} />
                            <Bars spans={[[1, 37], [1, 37], [1, 37], [1, 37], [1, 37]]} />
                            <Ic><path d="M2 0v37M18 0v37M35 0v37" stroke={TEAL} strokeWidth="3" /></Ic>
                        </Group>
                        <Group title="Template" h="h-[207px]">
                            <TableIcon strip={<rect x="1" y="21" width="36" height="8" fill="#a8b33a" />}><rect x="18" y="0" width="19" height="19" fill={TEAL} /><Plus /></TableIcon>
                            <TableIcon strip={<rect x="1" y="21" width="36" height="8" fill="#c83a50" />}><Cross /></TableIcon>
                            <TableIcon>
                                <rect x="14" y="0" width="24" height="16" fill="#ececec" />
                                <path d="M17 14L26 6M24 2L36 0L34 12Z" stroke="#5a4ea8" strokeWidth="3" fill="#7d6fc6" />
                            </TableIcon>
                            <TableIcon strip={<rect x="1" y="12" width="12" height="25" fill="#a8b33a" />}><rect x="18" y="0" width="19" height="19" fill={TEAL} /><Plus /></TableIcon>
                            <TableIcon strip={<rect x="13" y="4" width="12" height="25" fill="#c83a50" />}><Cross x={30} y={8} /></TableIcon>
                            <TableIcon strip={<><rect x="1" y="12" width="12" height="25" fill="#fff" stroke="#c8303a" strokeWidth="2" /><rect x="25" y="12" width="12" height="25" fill="#fff" stroke="#c8303a" strokeWidth="2" /><rect x="13" y="12" width="12" height="25" fill="#5ea8c0" /></>}><circle cx="19" cy="9" r="7" fill="#fff" /><Cross x={19} y={9} /></TableIcon>
                            <Ic>
                                <path d="M16 3V35H2Z" fill="#dcecf2" stroke={TEAL} strokeWidth="3" strokeLinejoin="round" />
                                <path d="M21 3V35H35Z" fill="#fdf0d8" stroke="#ef9f2f" strokeWidth="3" strokeLinejoin="round" />
                            </Ic>
                        </Group>
                    </aside>

                    {/* left editor */}
                    <section className="flex w-[1327px] shrink-0 flex-col">
                        <div className="flex h-[66px] shrink-0 items-center border-b-2 border-[#c4c4c4] pb-[2px] pl-[18px]">
                            <ZoomIn />
                            <div className="ml-[45px]"><ZoomOut /></div>
                            <div className="ml-[45px]"><ZoomFit /></div>
                            <div className="ml-[36px]"><ZoomField value="52 %" w="w-[106px]" /></div>
                            <div className="ml-[13px]"><Stepper /></div>
                            <div className="ml-[37px]"><Layers /></div>
                        </div>
                        <div className="flex min-h-0 flex-1 border-l-2 border-r-2 border-[#c4c4c4] pl-[3px] pt-[3px]">
                            <div className="flex-1 border border-b-2 border-[#bdbdbd] bg-white pl-[43px] pt-[43px]">
                                <div className="flex h-[1820px] w-[1005px] flex-col border-[5px] border-[#e3392e]">
                                    <div className="h-[189px] shrink-0" />
                                    <div className="h-[3px] shrink-0 bg-[#111]" />
                                    <div className="mx-[20px] flex min-h-0 flex-1 flex-col border-x-2 border-[#222]">
                                        <div className="h-[21px] shrink-0" />
                                        <div className="relative h-[1186px] shrink-0 border-t-[3px] border-[#111] bg-[radial-gradient(circle,#2a2a2a_1.1px,transparent_1.6px)] bg-[length:9.8px_9.8px]">
                                            {PEG.map(([kind, x, y], i) => (
                                                <div key={i} className="absolute" style={{ left: x - 269, top: y - 474 }}>
                                                    <Product kind={kind} />
                                                </div>
                                            ))}
                                        </div>
                                        <div className="h-[14px] shrink-0 border-b-[3px] border-t border-[#222] bg-[#c4c4c4]" />
                                        <div className="flex h-[265px] shrink-0 items-end pl-[9px]">
                                            {bottomShelf.map(([kind, m], i) => (
                                                <div key={i} className={m}><Product kind={kind} /></div>
                                            ))}
                                        </div>
                                        <div className="h-[14px] shrink-0 border-b-[3px] border-t border-[#222] bg-[#c4c4c4]" />
                                    </div>
                                </div>
                            </div>
                        </div>
                    </section>

                    {/* splitter */}
                    <div className="flex w-[25px] shrink-0 items-center justify-center"><Dots /></div>

                    {/* right editor */}
                    <section className="flex min-w-0 flex-1 flex-col">
                        <div className="flex h-[66px] shrink-0 items-center border-b-2 border-[#c4c4c4] pb-[2px] pl-[17px]">
                            <Undo />
                            <div className="ml-[46px]"><Undo flip /></div>
                            <div className="ml-[44px]"><ZoomIn /></div>
                            <div className="ml-[44px]"><ZoomOut /></div>
                            <div className="ml-[35px]"><ZoomReal /></div>
                            <div className="ml-[36px]"><ZoomFit /></div>
                            <div className="ml-[35px]"><ZoomField value="133 %" w="w-[108px]" /></div>
                            <div className="ml-[12px]"><Stepper /></div>
                        </div>
                        <div className="flex h-[1945px] shrink-0 border-l border-[#c8c8c8] bg-white font-['Liberation_Sans',sans-serif] text-[23px] text-[#1c1c1c]">
                            {/* row numbers */}
                            <div className="ml-[53px] mt-[93px] flex w-[30px] shrink-0 flex-col text-[27px]">
                                {rows.map((r) => (
                                    <div key={r} className="flex h-[151.6px] items-center justify-center">
                                        <span className="block -rotate-90">{r}</span>
                                    </div>
                                ))}
                            </div>
                            <div className="ml-[10px] w-[1371px] shrink-0">
                                <div className="grid h-[93px] grid-cols-9 items-end pb-[6px] text-center">
                                    {cols.map((c) => <div key={c}>{c}</div>)}
                                </div>
                                <div className="relative h-[1823px] border-[3px] border-[#111] bg-white">
                                    <div className="absolute inset-x-0 top-0 h-1/2 bg-[radial-gradient(circle,#b8b8b8_1.2px,transparent_1.6px)] bg-[length:12.6px_12.4px]" />
                                    <svg className="absolute inset-0 h-full w-full" viewBox="0 0 1365 1817" preserveAspectRatio="none">
                                        {cols.slice(1).map((c) => (
                                            <line key={c} x1={(c - 1) * 151.67} y1="0" x2={(c - 1) * 151.67} y2="1817" stroke="#6f6f6f" strokeWidth="3.2" strokeDasharray="16.5 8" />
                                        ))}
                                        {rows.slice(1).map((r) => (
                                            <line key={r} x1="0" y1={(r - 1) * 151.42} x2="1365" y2={(r - 1) * 151.42} stroke="#6f6f6f" strokeWidth="3.8" strokeDasharray="13 11" />
                                        ))}
                                    </svg>
                                    <div className="absolute inset-0 grid grid-cols-9 grid-rows-12">
                                        {CELLS.map((c, i) => <GridCell key={i} cell={c} />)}
                                    </div>
                                    <div className="absolute -left-[61px] -right-[63px] top-1/2 h-[4px] -translate-y-1/2 bg-[#111]" />
                                </div>
                            </div>
                            {/* row alignment buttons */}
                            <div className="ml-[46px] mt-[93px] flex shrink-0 flex-col">
                                {rows.map((r) => (
                                    <div key={r} className="h-[151.6px] pt-[39px]">
                                        <AlignIcon full={r === 7 || r === 8} />
                                    </div>
                                ))}
                            </div>
                        </div>
                    </section>
                </div>
            </div>

            {/* blue annotation outlines and speech bubble */}
            <div className="absolute left-[250px] top-[449px] h-[1237px] w-[992px] rounded-[38px] border-[6px] border-[#3b7ab8]" />
            <div className="absolute left-[1624px] top-[285px] h-[939px] w-[1400px] rounded-[38px] border-[6px] border-[#3b7ab8]" />
            <svg className="absolute left-0 top-0 h-[540px] w-[1640px]" viewBox="0 0 1640 540">
                <path d="M780 47H1496A55 55 0 0 1 1551 102V276A55 55 0 0 1 1496 331H1414L1603 518L1240 331H1023L949 423L935 331H780A55 55 0 0 1 725 276V102A55 55 0 0 1 780 47Z" fill="#edf3f9" stroke="#3b7ab8" strokeWidth="6" strokeLinejoin="round" />
            </svg>
            <div className="absolute left-[725px] top-[83px] w-[826px] text-center font-['Liberation_Sans',sans-serif] text-[48.7px] leading-[67px] text-[#2f77b5]">
                Products that need to be hung in
                <br />
                the fixture must be placed in the
                <br />
                dotted part of the template.
            </div>
        </div>
    );
}
